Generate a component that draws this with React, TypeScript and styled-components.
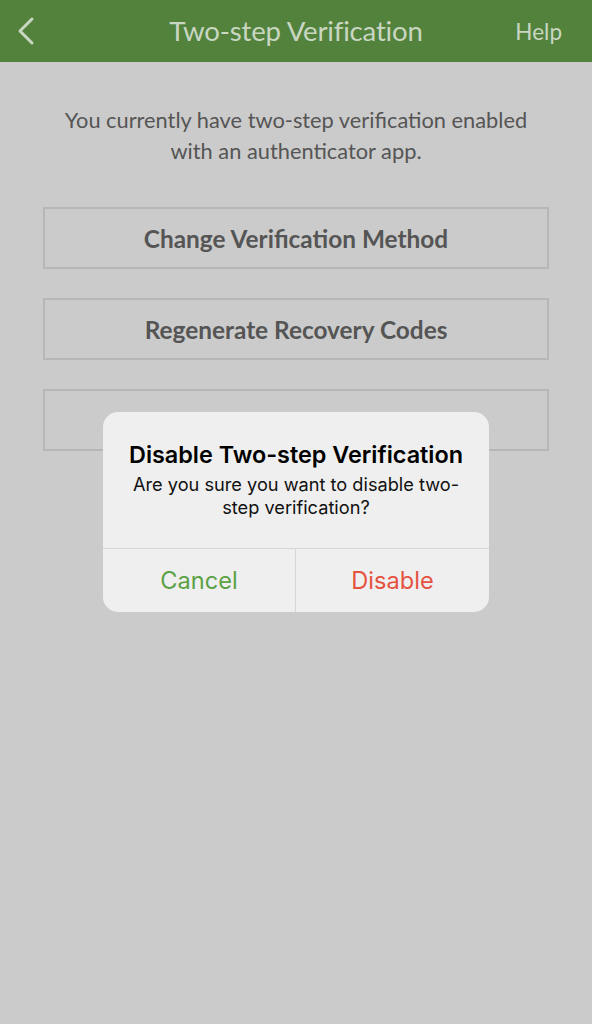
import React from "react";
import styled, { createGlobalStyle } from "styled-components";

const Global = createGlobalStyle`
  html, body { margin: 0; padding: 0; background: #cbcbcb; }
  body { font-family: "Lato", "Noto Sans", sans-serif; }
`;

const Screen = styled.div`
  position: relative;
  width: 592px;
  height: 1024px;
  background: #cbcbcb;
  overflow: hidden;
`;

const Header = styled.header`
  height: 62px;
  background: #52823c;
  display: grid;
  grid-template-columns: 80px 1fr 80px;
  align-items: center;
  color: #c9d6c2;
`;

const Back = styled.div`
  display: flex;
  align-items: center;
  padding-left: 16px;
`;

const Title = styled.h1`
  margin: 0 0 2px;
  text-align: center;
  font-weight: 400;
  font-size: 27.6px;
  letter-spacing: -0.2px;
`;

const Help = styled.div`
  text-align: right;
  padding-right: 30px;
  font-size: 22.5px;
`;

const Content = styled.main`
  padding: 42px 43px 0;
  display: flex;
  flex-direction: column;
`;

const Intro = styled.p`
  margin: 0 0 41px;
  text-align: center;
  color: #555;
  font-size: 21.8px;
  line-height: 31px;
`;

const Buttons = styled.div`
  display: flex;
  flex-direction: column;
  gap: 29px;
`;

const OutlineButton = styled.div`
  height: 62px;
  box-sizing: border-box;
  border: 2px solid #b7b7b7;
  display: flex;
  align-items: center;
  justify-content: center;
  color: #555;
  font-size: 24.4px;
  font-weight: 700;
`;

const Alert = styled.div`
  position: absolute;
  left: 103px;
  top: 412px;
  width: 386px;
  height: 200px;
  background: #efefef;
  border-radius: 15px;
  display: flex;
  flex-direction: column;
  font-family: "Inter", "Roboto", sans-serif;
  overflow: hidden;
`;

const AlertBody = styled.div`
  flex: 1;
  display: flex;
  flex-direction: column;
  align-items: center;
  padding: 29px 16px 0;
  text-align: center;
`;

const AlertTitle = styled.div`
  font-size: 23.4px;
  font-weight: 600;
  color: #000;
  line-height: 28px;
`;

const AlertMessage = styled.div`
  font-size: 18.2px;
  color: #111;
  line-height: 23px;
  margin-top: 4px;
`;

const AlertActions = styled.div`
  height: 63px;
  display: grid;
  grid-template-columns: 1fr 1fr;
  border-top: 1px solid #d6d6d6;
`;

const AlertAction = styled.div<{ $color: string; $divider?: boolean }>`
  display: flex;
  align-items: center;
  justify-content: center;
  font-size: 23.6px;
  color: ${(p) => p.$color};
  border-right: ${(p) => (p.$divider ? "1px solid #d6d6d6" : "none")};
`;

export default function App() {
  return (
    <Screen>
      <Global />
      <Header>
        <Back>
          <svg width="20" height="30" viewBox="0 0 20 30">
            <path d="M16 3 L4 15 L16 27" fill="none" stroke="#c9d6c2" strokeWidth="3" strokeLinecap="round" strokeLinejoin="round" />
          </svg>
        </Back>
        <Title>Two-step Verification</Title>
        <Help>Help</Help>
      </Header>
      <Content>
        <Intro>
          You currently have two-step verification enabled
          <br />
          with an authenticator app.
        </Intro>
        <Buttons>
          <OutlineButton>Change Verification Method</OutlineButton>
          <OutlineButton>Regenerate Recovery Codes</OutlineButton>
          <OutlineButton />
        </Buttons>
      </Content>
      <Alert>
        <AlertBody>
          <AlertTitle>Disable Two-step Verification</AlertTitle>
          <AlertMessage>
            Are you sure you want to disable two-
            <br />
            step verification?
          </AlertMessage>
        </AlertBody>
        <AlertActions>
          <AlertAction $color="#5ba145" $divider>Cancel</AlertAction>
          <AlertAction $color="#e5523f">Disable</AlertAction>
        </AlertActions>
      </Alert>
    </Screen>
  );
}
